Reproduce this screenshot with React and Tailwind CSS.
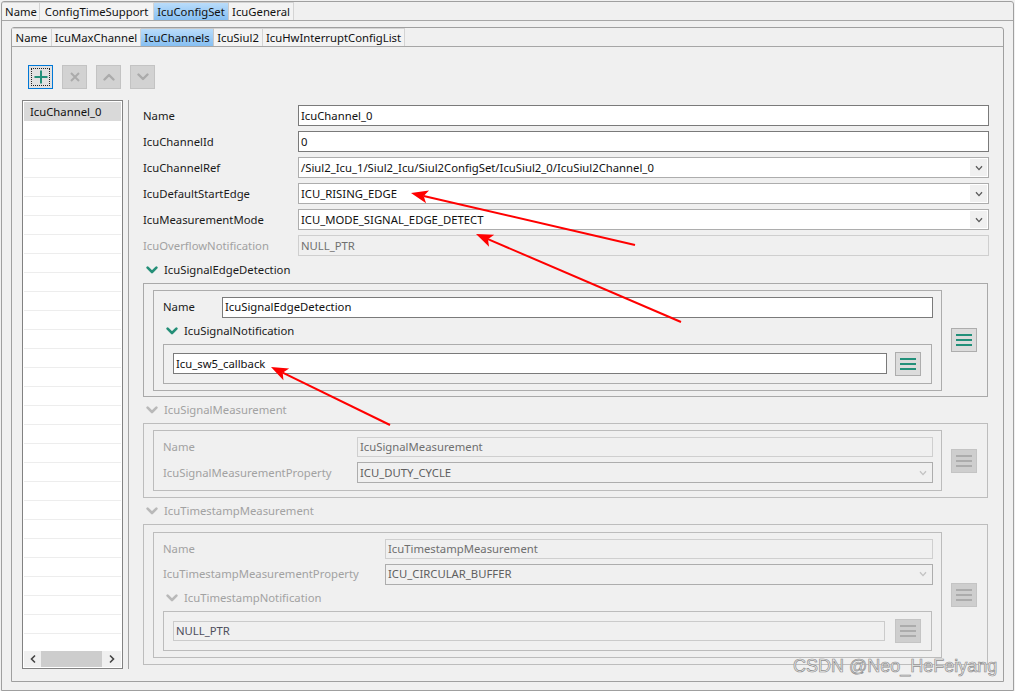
import React from "react";

function Chev({ c }) {
  return (
    <svg width="12" height="8" viewBox="0 0 12 8" className="shrink-0">
      <path d="M1.6 1.6L6 6L10.4 1.6" fill="none" stroke={c} strokeWidth="2.6" strokeLinecap="round" strokeLinejoin="round" />
    </svg>
  );
}

function DropArrow({ c }) {
  return (
    <svg width="8" height="6" viewBox="0 0 8 6">
      <path d="M1 1.2L4 4.6L7 1.2" fill="none" stroke={c} strokeWidth="1.3" />
    </svg>
  );
}

function MenuBtn({ disabled }) {
  const line = disabled ? "w-[16px] h-[2px] bg-[#acacac]" : "w-[16px] h-[2px] bg-[#22907a]";
  return (
    <div
      className={
        disabled
          ? "w-[26px] h-[24px] shrink-0 flex flex-col items-center justify-center gap-[3px] bg-[#cecece] border border-[#c4c4c4]"
          : "w-[26px] h-[24px] shrink-0 flex flex-col items-center justify-center gap-[3px] bg-[#dcdcdc] border border-[#adadad]"
      }
    >
      <div className={line} />
      <div className={line} />
      <div className={line} />
    </div>
  );
}

function TextField({ value, kind = "normal", h = "h-[21px]" }) {
  let cls = "";
  if (kind === "normal") cls = "bg-white border-[#7a7a7a] text-[#111]";
  else if (kind === "disabled") cls = "bg-[#f0f0f0] border-[#cfcfcf] text-[#6f6f6f]";
  else cls = "bg-[#f0f0f0] border-[#cbcbcb] text-[#4e4e5c]";
  return (
    <div className={`${h} w-full flex items-center border ${cls} pl-[2px] whitespace-nowrap overflow-hidden`}>
      {value}
    </div>
  );
}

function Combo({ value, disabled }) {
  return (
    <div
      className={
        disabled
          ? "h-[21px] w-full flex items-stretch border border-[#adadad] bg-[#f0f0f0] text-[#5f5f5f]"
          : "h-[21px] w-full flex items-stretch border border-[#adadad] bg-white text-[#111]"
      }
    >
      <div className="flex-1 flex items-center pl-[2px] whitespace-nowrap overflow-hidden">{value}</div>
      <div className="w-[17px] m-[1px] flex items-center justify-center bg-[#f0f0f0]">
        <DropArrow c={disabled ? "#c2c2c2" : "#5a5a5a"} />
      </div>
    </div>
  );
}

function Header({ text, disabled, h = "h-[26px]", ml = "ml-[3px]" }) {
  return (
    <div className={`${h} flex items-center ${ml} gap-[6px]`}>
      <Chev c={disabled ? "#b9b9b9" : "#258f78"} />
      <span className={disabled ? "text-[#a2a2a2]" : "text-[#1a1a1a]"}>{text}</span>
    </div>
  );
}

function Tab({ label, w, selected }) {
  return (
    <div
      className={
        selected
          ? `${w} h-full flex items-center justify-center border-r border-t border-[#c9c9c9] bg-gradient-to-b from-[#b9dcfa] to-[#86bff2] text-[#111] whitespace-nowrap`
          : `${w} h-full flex items-center justify-center border-r border-t border-[#d4d4d4] bg-[#f3f3f3] text-[#111] whitespace-nowrap`
      }
    >
      {label}
    </div>
  );
}

function Arrow({ x1, y1, x2, y2 }) {
  const dx = x2 - x1;
  const dy = y2 - y1;
  const len = Math.hypot(dx, dy);
  const ux = dx / len;
  const uy = dy / len;
  const hl = 17;
  const hw = 6.5;
  const bx = x2 - ux * hl;
  const by = y2 - uy * hl;
  const nx = x2 - ux * (hl - 4);
  const ny = y2 - uy * (hl - 4);
  const px = -uy;
  const py = ux;
  const pts = `${x2},${y2} ${bx + px * hw},${by + py * hw} ${nx},${ny} ${bx - px * hw},${by - py * hw}`;
  return (
    <g>
      <line x1={x1} y1={y1} x2={nx} y2={ny} stroke="#ff0000" strokeWidth="2" />
      <polygon points={pts} fill="#ff0000" />
    </g>
  );
}

export default function App() {
  const listRows = Array.from({ length: 28 });
  return (
    <div className="relative w-[1015px] h-[691px] bg-[#f0f0f0] font-['Noto_Sans',sans-serif] text-[11.3px] leading-none overflow-hidden pt-[1px] pl-[1px]">
      {/* outer frame */}
      <div className="w-[1013px] h-[690px] flex flex-col border border-[#9f9f9f] rounded-t-[3px]">
        <div className="h-[19px] flex items-stretch border-b border-[#a6a6a6] pl-[1px]">
          <Tab label="Name" w="w-[37px]" />
          <Tab label="ConfigTimeSupport" w="w-[114px]" />
          <Tab label="IcuConfigSet" w="w-[75px]" selected />
          <Tab label="IcuGeneral" w="w-[65px]" />
        </div>
        {/* inner frame */}
        <div className="ml-[9px] mt-[6px] w-[993px] h-[655px] flex flex-col border border-[#9f9f9f] rounded-t-[3px]">
          <div className="h-[19px] shrink-0 flex items-stretch border-b border-[#a6a6a6]">
            <Tab label="Name" w="w-[40px]" />
            <Tab label="IcuMaxChannel" w="w-[89px]" />
            <Tab label="IcuChannels" w="w-[73px]" selected />
            <Tab label="IcuSiul2" w="w-[49px]" />
            <Tab label="IcuHwInterruptConfigList" w="w-[142px]" />
          </div>
          {/* toolbar */}
          <div className="mt-[18px] ml-[16px] flex gap-[9px] h-[24px]">
            <div className="relative w-[25px] h-[24px] border border-[#0078d7] bg-[#e1e1e1] flex items-center justify-center">
              <div className="absolute inset-[2px] border border-dotted border-[#222]" />
              <svg width="16" height="16" viewBox="0 0 16 16">
                <path d="M8 1.5V14.5M1.5 8H14.5" stroke="#23907a" strokeWidth="2" />
              </svg>
            </div>
            <div className="w-[25px] h-[24px] border border-[#c3c3c3] bg-[#d2d2d2] flex items-center justify-center">
              <svg width="12" height="12" viewBox="0 0 12 12">
                <path d="M2 2L10 10M10 2L2 10" stroke="#ababab" strokeWidth="2" />
              </svg>
            </div>
            <div className="w-[25px] h-[24px] border border-[#c3c3c3] bg-[#d2d2d2] flex items-center justify-center">
              <svg width="12" height="8" viewBox="0 0 12 8">
                <path d="M1.5 6.5L6 2L10.5 6.5" fill="none" stroke="#ababab" strokeWidth="2.4" strokeLinecap="round" strokeLinejoin="round" />
              </svg>
            </div>
            <div className="w-[25px] h-[24px] border border-[#c3c3c3] bg-[#d2d2d2] flex items-center justify-center">
              <svg width="12" height="8" viewBox="0 0 12 8">
                <path d="M1.5 1.5L6 6L10.5 1.5" fill="none" stroke="#ababab" strokeWidth="2.4" strokeLinecap="round" strokeLinejoin="round" />
              </svg>
            </div>
          </div>
          {/* body */}
          <div className="mt-[11px] ml-[10px] flex items-start">
            {/* list */}
            <div className="w-[101px] h-[569px] flex flex-col border border-[#828282] bg-white">
              <div className="flex-1 overflow-hidden pt-[1px] px-[1px]">
                <div className="h-[19px] bg-[#d9d9d9] flex items-center pl-[6px] text-[#111]">IcuChannel_0</div>
                {listRows.map((_, i) => (
                  <div key={i} className="h-[19px] border-b border-[#ededed]" />
                ))}
              </div>
              <div className="h-[16px] shrink-0 flex items-stretch bg-[#f0f0f0] mb-[1px] mx-[1px]">
                <div className="w-[17px] flex items-center justify-center">
                  <svg width="8" height="10" viewBox="0 0 8 10">
                    <path d="M6 1.5L2.5 5L6 8.5" fill="none" stroke="#444" strokeWidth="1.6" />
                  </svg>
                </div>
                <div className="w-[61px] bg-[#cdcdcd]" />
                <div className="flex-1 flex items-center justify-center">
                  <svg width="8" height="10" viewBox="0 0 8 10">
                    <path d="M2 1.5L5.5 5L2 8.5" fill="none" stroke="#444" strokeWidth="1.6" />
                  </svg>
                </div>
              </div>
            </div>
            {/* separator */}
            <div className="ml-[5px] w-[1px] h-[569px] bg-[#a3a3a3]" />
            {/* form */}
            <div className="ml-[14px] w-[846px] pt-[5px] flex flex-col">
              <div className="grid grid-cols-[155px_691px] gap-y-[5px]">
                <div className="h-[21px] flex items-center text-[#1a1a1a]">Name</div>
                <TextField value="IcuChannel_0" />
                <div className="h-[21px] flex items-center text-[#1a1a1a]">IcuChannelId</div>
                <TextField value="0" />
                <div className="h-[21px] flex items-center text-[#1a1a1a]">IcuChannelRef</div>
                <Combo value="/Siul2_Icu_1/Siul2_Icu/Siul2ConfigSet/IcuSiul2_0/IcuSiul2Channel_0" />
                <div className="h-[21px] flex items-center text-[#1a1a1a]">IcuDefaultStartEdge</div>
                <Combo value="ICU_RISING_EDGE" />
                <div className="h-[21px] flex items-center text-[#1a1a1a]">IcuMeasurementMode</div>
                <Combo value="ICU_MODE_SIGNAL_EDGE_DETECT" />
                <div className="h-[21px] flex items-center text-[#a2a2a2]">IcuOverflowNotification</div>
                <TextField value="NULL_PTR" kind="disabled" />
              </div>

              {/* IcuSignalEdgeDetection */}
              <Header text="IcuSignalEdgeDetection" h="h-[27px]" />
              <div className="w-[845px] h-[114px] flex items-center border border-[#a9a9a9] pl-[9px] pr-[10px] gap-[9px]">
                <div className="flex-1 h-[101px] flex flex-col border border-[#acacac] pl-[9px] pr-[8px] pt-[6px]">
                  <div className="flex items-center">
                    <div className="w-[59px] text-[#1a1a1a]">Name</div>
                    <div className="flex-1">
                      <TextField value="IcuSignalEdgeDetection" />
                    </div>
                  </div>
                  <Header text="IcuSignalNotification" />
                  <div className="w-[769px] h-[40px] flex items-center border border-[#acacac] pl-[9px] pr-[10px] gap-[8px]">
                    <div className="flex-1">
                      <TextField value="Icu_sw5_callback" />
                    </div>
                    <MenuBtn />
                  </div>
                </div>
                <MenuBtn />
              </div>

              {/* IcuSignalMeasurement */}
              <Header text="IcuSignalMeasurement" disabled />
              <div className="w-[845px] h-[75px] flex items-center border border-[#bdbdbd] pl-[9px] pr-[10px] gap-[9px]">
                <div className="flex-1 h-[61px] flex flex-col border border-[#bcbcbc] pl-[9px] pr-[8px] pt-[6px] gap-[5px]">
                  <div className="flex items-center">
                    <div className="w-[194px] text-[#a2a2a2]">Name</div>
                    <div className="flex-1">
                      <TextField value="IcuSignalMeasurement" kind="disabled" h="h-[20px]" />
                    </div>
                  </div>
                  <div className="flex items-center">
                    <div className="w-[194px] text-[#a2a2a2]">IcuSignalMeasurementProperty</div>
                    <div className="flex-1">
                      <Combo value="ICU_DUTY_CYCLE" disabled />
                    </div>
                  </div>
                </div>
                <MenuBtn disabled />
              </div>

              {/* IcuTimestampMeasurement */}
              <Header text="IcuTimestampMeasurement" disabled />
              <div className="w-[845px] h-[141px] flex items-center border border-[#bdbdbd] pl-[9px] pr-[10px] gap-[9px]">
                <div className="flex-1 h-[126px] flex flex-col border border-[#bcbcbc] pl-[9px] pr-[8px] pt-[6px]">
                  <div className="flex items-center">
                    <div className="w-[222px] text-[#a2a2a2]">Name</div>
                    <div className="flex-1">
                      <TextField value="IcuTimestampMeasurement" kind="disabled" h="h-[20px]" />
                    </div>
                  </div>
                  <div className="flex items-center mt-[5px]">
                    <div className="w-[222px] text-[#a2a2a2]">IcuTimestampMeasurementProperty</div>
                    <div className="flex-1">
                      <Combo value="ICU_CIRCULAR_BUFFER" disabled />
                    </div>
                  </div>
                  <Header text="IcuTimestampNotification" disabled />
                  <div className="w-[769px] h-[40px] flex items-center border border-[#bcbcbc] pl-[9px] pr-[10px] gap-[10px]">
                    <div className="flex-1">
                      <TextField value="NULL_PTR" kind="disabled-dark" h="h-[20px]" />
                    </div>
                    <MenuBtn disabled />
                  </div>
                </div>
                <MenuBtn disabled />
              </div>
            </div>
          </div>
        </div>
      </div>

      {/* annotation arrows */}
      <svg className="absolute left-0 top-0 pointer-events-none" width="1015" height="691">
        <Arrow x1={635} y1={245} x2={411} y2={193} />
        <Arrow x1={681} y1={322} x2={476} y2={234} />
        <Arrow x1={390} y1={425} x2={271} y2={367} />
      </svg>

      {/* watermark */}
      <div className="absolute left-[793px] top-[657px] font-['Liberation_Sans',sans-serif] text-[18px] leading-none text-[#f2f2f2] [-webkit-text-stroke:0.7px_#8e8e8e] pointer-events-none whitespace-nowrap">
        CSDN @Neo_HeFeiyang
      </div>
    </div>
  );
}
